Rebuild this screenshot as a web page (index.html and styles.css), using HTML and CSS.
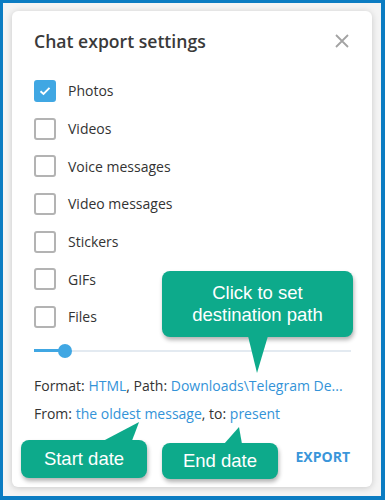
FILE: index.html
```html
<!DOCTYPE html>
<html lang="en">
<head>
    <meta charset="UTF-8">
    <meta name="viewport" content="width=device-width, initial-scale=1.0">
    <title>Chat export settings</title>
    <link rel="stylesheet" href="styles.css">
</head>
<body>
    <div class="dialog">
        <div class="header">
            <div class="title">Chat export settings</div>
            <button class="close" aria-label="Close">
                <svg width="14" height="14" viewBox="0 0 14 14">
                    <path d="M1 1 L13 13 M13 1 L1 13" stroke="#a3a3a3" stroke-width="1.8" fill="none"/>
                </svg>
            </button>
        </div>

        <ul class="options">
            <li class="option">
                <span class="box checked">
                    <svg width="12" height="10" viewBox="0 0 12 10">
                        <path d="M1.5 5.2 L4.5 8 L10.5 1.8" stroke="#ffffff" stroke-width="1.9" fill="none"/>
                    </svg>
                </span>
                <span class="label">Photos</span>
            </li>
            <li class="option"><span class="box"></span><span class="label">Videos</span></li>
            <li class="option"><span class="box"></span><span class="label">Voice messages</span></li>
            <li class="option"><span class="box"></span><span class="label">Video messages</span></li>
            <li class="option"><span class="box"></span><span class="label">Stickers</span></li>
            <li class="option"><span class="box"></span><span class="label">GIFs</span></li>
            <li class="option"><span class="box"></span><span class="label">Files</span></li>
        </ul>

        <div class="slider">
            <div class="track">
                <div class="fill"></div>
                <div class="thumb"></div>
            </div>
        </div>

        <p class="info">Format: <a href="#">HTML</a>, Path: <a href="#">Downloads\Telegram De...</a></p>
        <p class="info">From: <a href="#">the oldest message</a>, to: <a href="#">present</a></p>

        <div class="footer">
            <button class="export">Export</button>
        </div>
    </div>

    <!-- annotation callouts -->
    <div class="callout callout-path">Click to set<br>destination path</div>
    <div class="callout callout-start">Start date</div>
    <div class="callout callout-end">End date</div>
</body>
</html>
```

FILE: styles.css
```css
* {
    margin: 0;
    padding: 0;
    box-sizing: border-box;
}

body {
    position: relative;
    width: 385px;
    height: 500px;
    background-color: #f4f4f4;
    border-style: solid;
    border-color: #0b7cc2;
    border-width: 3px 4px 4px 3px;
    padding: 8px 0 0 9px;
    font-family: 'Open Sans', sans-serif;
    color: #333333;
}

.dialog {
    width: 360px;
    height: 476px;
    background-color: #ffffff;
    border-radius: 6px;
    box-shadow: 0 1px 7px rgba(0, 0, 0, 0.18);
    padding: 0 21px 0 22px;
}

.header {
    height: 61px;
    padding-top: 18px;
    display: flex;
    justify-content: space-between;
    align-items: flex-start;
}

.title {
    font-size: 17.6px;
    font-weight: 600;
    line-height: 24px;
    color: #3a3a3a;
}

.close {
    border: none;
    background: none;
    width: 14px;
    height: 14px;
    margin: 5px 2px 0 0;
    display: flex;
    cursor: pointer;
}

.options {
    list-style: none;
}

.option {
    height: 37.7px;
    display: flex;
    align-items: center;
}

.box {
    width: 22px;
    height: 22px;
    border: 2px solid #b3b3b3;
    border-radius: 3px;
    margin-right: 12px;
    display: flex;
    align-items: center;
    justify-content: center;
}

.box.checked {
    background-color: #40a7e3;
    border-color: #40a7e3;
}

.label {
    font-size: 14px;
    color: #333333;
}

.slider {
    height: 30px;
    display: flex;
    align-items: center;
}

.track {
    position: relative;
    width: 100%;
    height: 2px;
    background-color: #e3eaf1;
}

.fill {
    position: absolute;
    left: 0;
    top: -0.5px;
    width: 31px;
    height: 3px;
    background-color: #40a7e3;
}

.thumb {
    position: absolute;
    left: 24px;
    top: -6px;
    width: 14px;
    height: 14px;
    border-radius: 50%;
    background-color: #40a7e3;
}

.info {
    font-size: 14px;
    line-height: 20px;
    margin-top: 10px;
    color: #333333;
    white-space: nowrap;
}

.info + .info {
    margin-top: 8px;
}

.info a {
    color: #3393d8;
    text-decoration: none;
}

.footer {
    margin-top: 17px;
    display: flex;
    justify-content: flex-end;
}

.export {
    height: 32px;
    border: none;
    background: none;
    font-family: 'Open Sans', sans-serif;
    font-size: 14px;
    font-weight: 700;
    text-transform: uppercase;
    color: #3a96da;
    padding: 0 1px;
    cursor: pointer;
}

.callout {
    position: absolute;
    background-color: #0daa8b;
    color: #ffffff;
    font-family: 'Liberation Sans', Arial, sans-serif;
    font-size: 18.5px;
    border-radius: 8px;
    box-shadow: 1px 3px 4px rgba(0, 0, 0, 0.3);
    display: flex;
    align-items: center;
    justify-content: center;
    text-align: center;
}

.callout::after {
    content: "";
    position: absolute;
    background-color: #0daa8b;
}

.callout-path {
    left: 159px;
    top: 268px;
    width: 191px;
    height: 66px;
    line-height: 22px;
}

.callout-path::after {
    left: 86px;
    top: 65px;
    width: 20px;
    height: 37px;
    clip-path: polygon(0 0, 100% 0, 45% 100%);
}

.callout-start {
    left: 18px;
    top: 437px;
    width: 126px;
    height: 38px;
}

.callout-start::after {
    left: 82px;
    top: -18px;
    width: 38px;
    height: 19px;
    clip-path: polygon(0 100%, 95% 0, 76% 100%);
}

.callout-end {
    left: 159px;
    top: 440px;
    width: 116px;
    height: 36px;
}

.callout-end::after {
    left: 62px;
    top: -16px;
    width: 20px;
    height: 17px;
    clip-path: polygon(0 100%, 75% 0, 90% 100%);
}
```
